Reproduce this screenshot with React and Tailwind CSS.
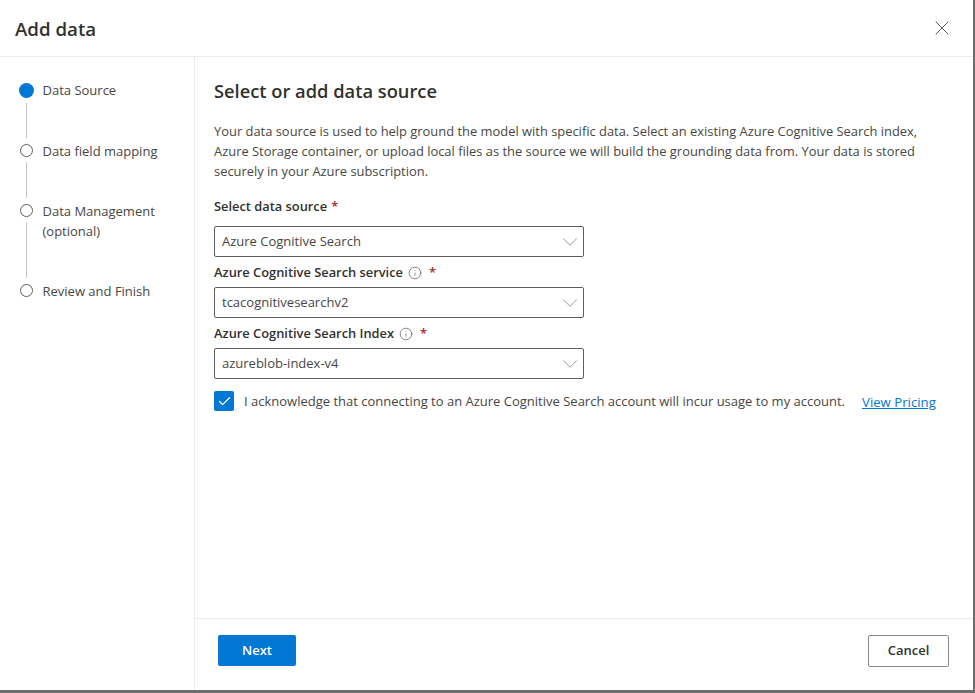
import React from "react";
import { X, ChevronDown, Check, Info } from "lucide-react";

const STEPS = [
  { label: "Data Source", active: true, height: "h-[60px]", textClass: "-mt-[3px]" },
  { label: "Data field mapping", height: "h-[60px]", textClass: "-mt-[2px]" },
  { label: "Data Management (optional)", height: "h-[80px]", textClass: "-mt-[2px]" },
  { label: "Review and Finish", last: true, height: "h-[30px]", textClass: "-mt-[2px]" },
];

const Step = ({ step }) => (
  <div className={`flex ${step.height}`}>
    <div className="flex w-[15px] flex-col items-center">
      {step.active ? (
        <span className="h-[15px] w-[15px] shrink-0 rounded-full bg-[#0078d4]" />
      ) : (
        <span className="mt-px h-[13px] w-[13px] shrink-0 rounded-full border border-[#605e5c] bg-white" />
      )}
      {!step.last && <span className="mt-[5px] mb-[5px] w-px flex-1 bg-[#c8c6c4]" />}
    </div>
    <div className={`ml-[8.5px] w-[125px] text-[13px] leading-[20px] text-[#484644] ${step.textClass}`}>{step.label}</div>
  </div>
);

const Field = ({ label, info, value, labelClass = "mb-[5px]" }) => (
  <div>
    <div className={`flex h-5 items-center pt-[2px] text-[12.85px] font-semibold text-[#323130] ${labelClass}`}>
      <span>{label}</span>
      {info && <Info size={14} strokeWidth={1.25} className="ml-[5px] text-[#605e5c]" />}
      <span className={`text-[#a4262c] ${info ? "ml-[7px]" : "ml-1"}`}>*</span>
    </div>
    <div className="flex h-[31px] w-[370px] items-center justify-between rounded-[2px] border border-[#605e5c] bg-white pl-[7px] text-[13px] text-[#484644]">
      <span>{value}</span>
      <ChevronDown size={26} strokeWidth={0.8} className="text-[#8a8886]" />
    </div>
  </div>
);

export default function App() {
  return (
    <div className="h-[693px] w-[975px] overflow-hidden bg-[#6e6e6e] font-['Open_Sans','Noto_Sans',sans-serif]">
      <div className="flex h-[690px] w-[973px] flex-col bg-white">
        {/* Header */}
        <div className="flex h-[57px] shrink-0 items-center justify-between border-b border-[#edebe9] pr-[19px] pl-[15px]">
          <h1 className="mt-[3px] text-[18.7px] font-semibold text-[#323130]">Add data</h1>
          <X size={24} strokeWidth={1} className="text-[#605e5c]" />
        </div>

        <div className="flex min-h-0 flex-1">
          {/* Stepper */}
          <div className="w-[195px] shrink-0 border-r border-[#edebe9] pt-[26px] pl-[19px]">
            {STEPS.map((step) => (
              <Step key={step.label} step={step} />
            ))}
          </div>

          <div className="flex min-w-0 flex-1 flex-col">
            {/* Form */}
            <div className="flex-1 pt-[20px] pl-[19px]">
              <h2 className="text-[18.3px] leading-[28px] font-semibold text-[#323130]">Select or add data source</h2>
              <p className="mt-[16px] w-[720px] text-[12.92px] leading-[20px] text-[#484644]">
                Your data source is used to help ground the model with specific data. Select an existing Azure Cognitive Search index, Azure Storage container, or upload local files as the source we will build the grounding data from. Your data is stored securely in your Azure subscription.
              </p>
              <div className="mt-[15px] flex flex-col gap-[5px]">
                <Field label="Select data source" value="Azure Cognitive Search" labelClass="mb-[10px]" />
                <Field label="Azure Cognitive Search service" info value="tcacognitivesearchv2" />
                <Field label="Azure Cognitive Search Index" info value="azureblob-index-v4" />
              </div>
              <div className="mt-[12px] flex items-start">
                <span className="flex h-5 w-5 items-center justify-center rounded-[2px] bg-[#0078d4]">
                  <Check size={15} strokeWidth={2} className="text-white" />
                </span>
                <span className="ml-[10px] text-[13px] leading-5 text-[#484644]">
                  I acknowledge that connecting to an Azure Cognitive Search account will incur usage to my account.
                </span>
                <a href="#" className="mt-px ml-[17px] text-[13.2px] leading-5 text-[#0078d4] underline">View Pricing</a>
              </div>
            </div>

            {/* Footer */}
            <div className="flex h-[72px] shrink-0 items-start justify-between border-t border-[#edebe9] px-[23px] pt-[16px]">
              <button className="h-[31px] w-[78px] rounded-[2px] bg-[#0078d4] text-[13px] font-semibold text-white">Next</button>
              <button className="mr-px h-[32px] w-[81px] rounded-[2px] border border-[#8a8886] bg-white text-[13px] font-semibold text-[#323130]">Cancel</button>
            </div>
          </div>
        </div>
      </div>
    </div>
  );
}
